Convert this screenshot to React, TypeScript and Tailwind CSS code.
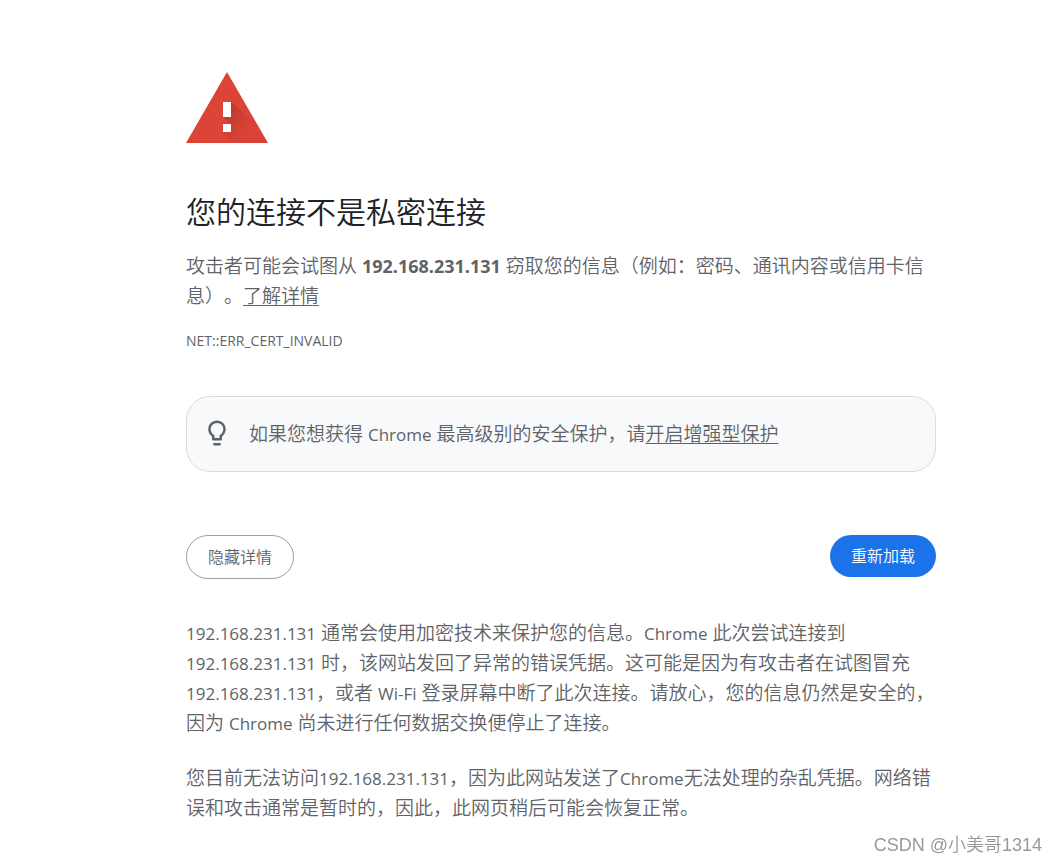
import type { ReactNode } from "react";

const HOST = "192.168.231.131";

function Latin({ children }: { children: ReactNode }) {
  return <span className="text-[17px] leading-5 font-normal">{children}</span>;
}

function WarningIcon() {
  return (
    <svg className="block h-[71px] w-[82px]" viewBox="0 0 82 71" role="img" aria-label="警告">
      <defs>
        <linearGradient id="shade" gradientUnits="userSpaceOnUse" x1="38" y1="38" x2="60" y2="60">
          <stop offset="0" stopColor="#8f2a20" stopOpacity="0.4" />
          <stop offset="1" stopColor="#8f2a20" stopOpacity="0.02" />
        </linearGradient>
      </defs>
      <path d="M41 0 82 71H0z" fill="#db4437" />
      <path d="M45 30 70 52 82 71H48L37 60 45 53 37 45z" fill="url(#shade)" />
      <path d="M37 30h8v15h-8zM37 52h8v8h-8z" fill="#fff" />
    </svg>
  );
}

function BulbIcon() {
  return (
    <svg className="-mt-0.5 size-[30px] shrink-0" viewBox="0 0 24 24" fill="#5f6368" aria-hidden="true">
      <path d="M9 21c0 .5.4 1 1 1h4c.6 0 1-.5 1-1v-1H9v1zm3-19C8.100 2 5 5.100 5 9c0 2.400 1.200 4.500 3 5.700V17c0 .5.4 1 1 1h6c.6 0 1-.5 1-1v-2.300c1.800-1.300 3-3.400 3-5.700 0-3.900-3.100-7-7-7zm2.900 11.100-.9.6V16h-4v-2.300l-.9-.6C7.800 12.200 7 10.600 7 9c0-2.800 2.200-5 5-5s5 2.200 5 5c0 1.600-.8 3.200-2.100 4.100z" />
    </svg>
  );
}

export default function App() {
  return (
    <div className="min-h-screen bg-white font-['Open_Sans','Noto_Sans_CJK_SC',sans-serif] text-[19px] leading-[30px] font-[350] text-[#5f6368]">
      <main className="ml-[186px] w-[calc(100%-186px)] max-w-[750px] pt-[72px] pb-10 [text-spacing-trim:space-all]">
        <WarningIcon />
        <h1 className="mt-[49px] text-[30px] leading-10 font-[350] text-[#202124]">您的连接不是私密连接</h1>
        <p className="mt-[19px]">
          攻击者可能会试图从 <strong className="text-[18px] leading-5 font-bold">{HOST}</strong>{" "}
          窃取您的信息（例如：密码、通讯内容或信用卡信息）。
          <a href="#details" className="underline decoration-1 underline-offset-2">了解详情</a>
        </p>
        <div className="mt-[18px] text-[14px] leading-6 font-normal">NET::ERR_CERT_INVALID</div>

        <div className="mt-[43px] flex items-center gap-[17px] rounded-[24px] border border-[#dadce0] bg-[#f8f9fa] px-[15px] py-[22px]">
          <BulbIcon />
          <p>
            如果您想获得 <Latin>Chrome</Latin> 最高级别的安全保护，请
            <a href="#protection" className="underline decoration-1 underline-offset-2">开启增强型保护</a>
          </p>
        </div>

        <div className="mt-[63px] flex items-start justify-between text-[16px] leading-[22px]">
          <button type="button" className="rounded-full border border-[#9aa0a6] px-[21px] py-[10px]">
            隐藏详情
          </button>
          <button type="button" className="rounded-full bg-[#1a73e8] px-[21px] py-[10px] text-white">
            重新加载
          </button>
        </div>

        <section id="details" className="mt-[39px] flex flex-col gap-[25px]">
          <p>
            <Latin>{HOST}</Latin> 通常会使用加密技术来保护您的信息。<Latin>Chrome</Latin> 此次尝试连接到{" "}
            <Latin>{HOST}</Latin> 时，该网站发回了异常的错误凭据。这可能是因为有攻击者在试图冒充{" "}
            <Latin>{HOST}</Latin>，或者 <Latin>Wi-Fi</Latin> 登录屏幕中断了此次连接。请放心，您的信息仍然是安全的，因为{" "}
            <Latin>Chrome</Latin> 尚未进行任何数据交换便停止了连接。
          </p>
          <p>
            您目前无法访问<Latin>{HOST}</Latin>，因为此网站发送了<Latin>Chrome</Latin>
            无法处理的杂乱凭据。网络错误和攻击通常是暂时的，因此，此网页稍后可能会恢复正常。
          </p>
        </section>
      </main>
      <div className="fixed right-[15px] bottom-1 font-['Liberation_Sans','Noto_Sans_CJK_SC',sans-serif] text-[18px] leading-[30px] text-[#999]">
        CSDN @小美哥1314
      </div>
    </div>
  );
}
